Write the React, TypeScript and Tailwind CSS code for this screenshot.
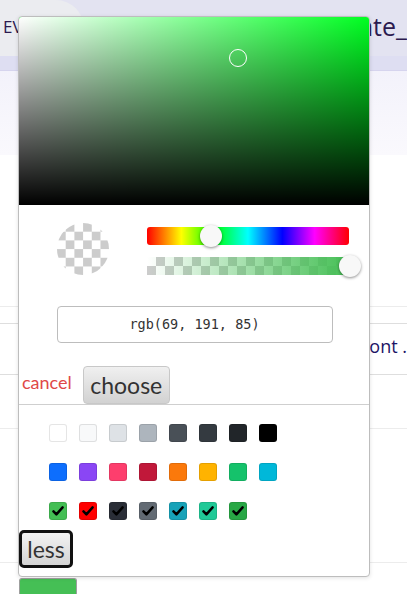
import React from 'react';

const GRAYS = ['#ffffff', '#f8f9fa', '#dee2e6', '#adb5bd', '#495057', '#343a40', '#212529', '#000000'];
const BRIGHTS = ['#0d6efd', '#8a46f5', '#fd3e6d', '#c1183a', '#fb790b', '#ffb300', '#15c26b', '#00b8d9'];
const RECENT = ['#43be54', '#ff0000', '#2a2e37', '#626a73', '#17a2b8', '#20c997', '#28a745'];

const Tick: React.FC = () => (
  <svg width="14" height="14" viewBox="0 0 14 14">
    <path d="M2.5 7.4 L5.4 10.4 L11.6 3.4" fill="none" stroke="#000" strokeWidth="2.5" strokeLinecap="round" strokeLinejoin="round" />
  </svg>
);

const Swatch: React.FC<{ color: string; checked?: boolean }> = ({ color, checked }) => (
  <div
    className="w-[18px] h-[18px] rounded-[3px] border border-black/10 flex items-center justify-center"
    style={{ backgroundColor: color }}
  >
    {checked && <Tick />}
  </div>
);

const ColorPicker: React.FC = () => {
  return (
    <div className="absolute left-[18px] top-[16px] w-[352px] h-[561px] bg-white border border-[#bdbdbd] rounded-[4px] shadow-[0_1px_4px_rgba(0,0,0,0.12)] overflow-hidden">
      {/* Saturation / value area */}
      <div className="relative h-[188px] bg-[#00ff22]">
        <div className="absolute inset-0 bg-linear-to-r from-white to-transparent" />
        <div className="absolute inset-0 bg-linear-to-b from-transparent to-black" />
        <div className="absolute left-[210px] top-[32px] w-[18px] h-[18px] rounded-full border-[1.5px] border-white" />
      </div>

      {/* Preview + sliders */}
      <div className="flex pt-[18px] pl-[38px]">
        <div className="w-[52px] h-[52px] rounded-full bg-[conic-gradient(#ccc_25%,#fff_0_50%,#ccc_0_75%,#fff_0)] bg-[length:17.4px_17.4px]" />
        <div className="ml-[38px] pt-[4px] flex flex-col gap-[12px]">
          <div className="relative w-[202px] h-[18px] rounded-[3px] bg-[linear-gradient(to_right,#f00,#ff0_17%,#0f0_33%,#0ff_50%,#00f_67%,#f0f_83%,#f00)]">
            <div className="absolute left-[53px] top-[-2px] w-[22px] h-[22px] rounded-full bg-[#f8f8f8] shadow-[0_1px_3px_rgba(0,0,0,0.45)]" />
          </div>
          <div className="relative w-[202px] h-[18px] bg-[conic-gradient(#ccc_25%,#fff_0_50%,#ccc_0_75%,#fff_0)] bg-[length:18px_18px]">
            <div className="absolute inset-0 bg-linear-to-r from-transparent to-[#45bf55]" />
            <div className="absolute left-[192px] top-[-2px] w-[22px] h-[22px] rounded-full bg-[#f8f8f8] shadow-[0_1px_3px_rgba(0,0,0,0.45)]" />
          </div>
        </div>
      </div>

      {/* Value input */}
      <div className="flex justify-center pt-[31px]">
        <div className="ml-[1px] w-[276px] h-[37px] border border-[#bdbdbd] rounded-[4px] flex items-center justify-center font-['DejaVu_Sans_Mono',monospace] text-[13.5px] text-[#333]">
          rgb(69, 191, 85)
        </div>
      </div>

      {/* Actions */}
      <div className="flex items-end h-[62px] pl-[3px] border-b border-[#cfcfcf]">
        <span className="mb-[8px] font-['Lato',sans-serif] text-[18px] text-[#e04848]">cancel</span>
        <button className="ml-[11px] h-[38px] w-[87px] rounded-[4px] border border-[#c8c8c8] bg-linear-to-b from-[#f0f0f0] to-[#d2d2d2] font-['Lato',sans-serif] text-[23px] text-[#333] leading-none">
          choose
        </button>
      </div>

      {/* Swatches */}
      <div className="pl-[30px] pt-[19px] flex flex-col gap-[21px]">
        <div className="flex gap-[12px]">
          {GRAYS.map((c) => <Swatch key={c} color={c} />)}
        </div>
        <div className="flex gap-[12px]">
          {BRIGHTS.map((c) => <Swatch key={c} color={c} />)}
        </div>
        <div className="flex gap-[12px]">
          {RECENT.map((c) => <Swatch key={c} color={c} checked />)}
        </div>
      </div>

      <button className="mt-[10px] h-[38px] w-[54px] rounded-[5px] border-[3px] border-[#111] bg-linear-to-b from-[#f2f2f2] to-[#d4d4d4] font-['Lato',sans-serif] text-[23px] text-[#333] leading-none">
        less
      </button>
    </div>
  );
};

const App: React.FC = () => {
  return (
    <div className="relative w-[407px] h-[594px] overflow-hidden bg-white font-['Open_Sans',sans-serif]">
      {/* Header */}
      <div className="h-[56px] bg-[#e3e3f1] flex">
        <div className="w-[84px] h-full bg-[#ebecf0] rounded-tr-[28px] pl-[3px] pt-[14px] text-[17px] text-[#2b1a4f]">EV</div>
        <div className="flex-1" />
        <div className="pt-[6px] text-[25px] text-[#2b1a4f] leading-[40px]">ate_</div>
      </div>
      <div className="h-[14px] bg-[#dedef2]" />
      <div className="h-[85px] bg-linear-to-b from-[#f3f2fb] to-[#faf9fd] border-t border-[#d6d4ee]" />

      {/* Content rows */}
      <div className="h-[151px]" />
      <div className="h-[17px] border-t border-[#ececec]" />
      <div className="h-[51px] border-t border-[#dedede] flex justify-end items-center">
        <span className="mb-[6px] text-[18px] text-[#1c1466] leading-none">ont .</span>
      </div>
      <div className="h-[54px] border-t border-[#dedede]" />
      <div className="h-[134px] border-t border-[#ececec]" />
      <div className="h-[32px] border-t border-[#ececec] pl-[19px] flex items-end">
        <div className="w-[58px] h-[16px] bg-[#45bf55] border border-b-0 border-[#9e9e9e] rounded-t-[3px]" />
      </div>

      <ColorPicker />
    </div>
  );
};

export default App;
